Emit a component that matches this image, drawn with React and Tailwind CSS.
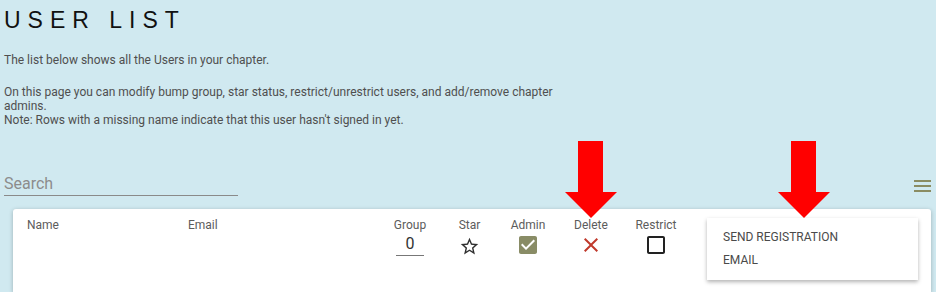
import React from "react";

// Material-style icon paths
const STAR_BORDER =
  "M22 9.24l-7.19-.62L12 2 9.19 8.63 2 9.24l5.46 4.73L5.82 21 12 17.27 18.18 21l-1.63-7.03L22 9.24zM12 15.4l-3.76 2.27 1-4.28-3.32-2.88 4.38-.38L12 6.1l1.71 4.04 4.38.38-3.32 2.88 1 4.28L12 15.4z";
const CHECK_BOX =
  "M19 3H5c-1.11 0-2 .9-2 2v14c0 1.1.89 2 2 2h14c1.11 0 2-.9 2-2V5c0-1.1-.89-2-2-2zm-9 14l-5-5 1.41-1.41L10 14.17l7.59-7.59L19 8l-9 9z";
const CHECK_BLANK =
  "M19 5v14H5V5h14m0-2H5c-1.1 0-2 .9-2 2v14c0 1.1.9 2 2 2h14c1.1 0 2-.9 2-2V5c0-1.1-.9-2-2-2z";
const CLOSE =
  "M19 6.41L17.59 5 12 10.59 6.41 5 5 6.41 10.59 12 5 17.59 6.41 19 12 13.41 17.59 19 19 17.59 13.41 12z";

const Icon = ({ d, className }) => (
  <svg viewBox="0 0 24 24" className={className} fill="currentColor">
    <path d={d} />
  </svg>
);

// Big red annotation arrow pointing down
const Arrow = ({ className }) => (
  <svg viewBox="0 0 52 77" className={className}>
    <polygon points="13,0 38,0 38,51 52,51 26,77 0,51 13,51" fill="#ff0000" />
  </svg>
);

const Column = ({ label, width, children }) => (
  <div className={`flex flex-col items-center ${width}`}>
    <span className="leading-[14px]">{label}</span>
    {children}
  </div>
);

const App = () => {
  return (
    <div
      className="relative h-[292px] w-[936px] overflow-hidden bg-[#d0e9f0] text-[12px] text-[#4f4f4f]"
      style={{ fontFamily: "Roboto, 'Liberation Sans', sans-serif" }}
    >
      {/* Title + intro */}
      <h1
        className="ml-[4px] mt-[6px] text-[23px] leading-[28px] tracking-[7px] text-[#111]"
        style={{ fontFamily: "'Liberation Sans', Arial, sans-serif" }}
      >
        USER LIST
      </h1>
      <p className="ml-[4px] mt-[19px] leading-[14px]">
        The list below shows all the Users in your chapter.
      </p>
      <p className="ml-[4px] mt-[18px] leading-[14px]">
        <span className="whitespace-nowrap">
          On this page you can modify bump group, star status, restrict/unrestrict users, and add/remove chapter
        </span>
        <br />
        admins.
        <br />
        Note: Rows with a missing name indicate that this user hasn't signed in yet.
      </p>

      {/* Search + menu toggle */}
      <div className="mt-[46px] flex items-end justify-between pr-[5px]">
        <div className="ml-[4px] w-[234px] border-b border-[#8a8a8a] pb-[1px] pt-[1px] text-[16px] leading-[20px] text-[#8c8c8c]">
          Search
        </div>
        <div className="mb-[4px] flex w-[17px] flex-col gap-[3px]">
          <span className="h-[2px] bg-[#8a8c62]" />
          <span className="h-[2px] bg-[#8a8c62]" />
          <span className="h-[2px] bg-[#8a8c62]" />
        </div>
      </div>

      {/* Table card */}
      <div className="ml-[13px] mr-[5px] mt-[13px] h-[83px] rounded-t-[3px] bg-white shadow-[0_1px_4px_rgba(0,0,0,0.25)]">
        <div className="flex pl-[14px] pt-[9px] text-[#5c5c5c]">
          <div className="w-[161px] leading-[14px]">Name</div>
          <div className="w-[192px] leading-[14px]">Email</div>
          <Column label="Group" width="w-[60px]">
            <div className="h-[24px] w-[28px] border-b border-[#777] text-center text-[16px] leading-[23px] text-[#333]">
              0
            </div>
          </Column>
          <Column label="Star" width="w-[59px]">
            <div className="mt-[1px] flex h-[24px] w-[24px] items-center justify-center">
              <Icon d={STAR_BORDER} className="mt-[3px] h-[21px] w-[21px] text-[#2f2f2f]" />
            </div>
          </Column>
          <Column label="Admin" width="w-[58px]">
            <Icon d={CHECK_BOX} className="mt-[1px] h-[24px] w-[24px] text-[#898c66]" />
          </Column>
          <Column label="Delete" width="w-[68px]">
            <Icon d={CLOSE} className="mt-[1px] h-[24px] w-[24px] text-[#c0392b]" />
          </Column>
          <Column label="Restrict" width="w-[62px]">
            <Icon d={CHECK_BLANK} className="mt-[1px] h-[24px] w-[24px] text-[#222]" />
          </Column>
        </div>
      </div>

      {/* Open row menu */}
      <div className="absolute left-[707px] top-[218px] w-[211px] bg-white pb-[8px] pl-[16px] pt-[8px] text-[12px] leading-[23px] text-[#4a4a4a] shadow-[0_2px_4px_rgba(0,0,0,0.3)]">
        SEND REGISTRATION
        <br />
        EMAIL
      </div>

      {/* Annotation arrows */}
      <Arrow className="absolute left-[565px] top-[141px] h-[77px] w-[52px]" />
      <Arrow className="absolute left-[778px] top-[141px] h-[77px] w-[52px]" />
    </div>
  );
};

export default App;
